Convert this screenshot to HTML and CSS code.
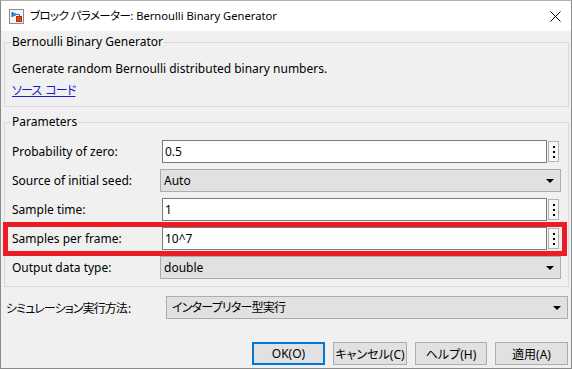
FILE: index.html
```html
<!DOCTYPE html>
<html>
  <head>
    <link rel="stylesheet" href="styles.css">
  </head>
  <body>
    <div class="window">
      <div class="titlebar">
        <svg class="app-icon" width="15" height="15" viewBox="0 0 15 15">
          <rect x="0.5" y="0.5" width="14" height="14" fill="#f4f4f4" stroke="#8c8c8c"/>
          <path d="M3 3v5M3.5 3.5l4 2-4 2z" stroke="#1f6fc4" fill="#4a9be0" stroke-width="1"/>
          <path d="M7.5 5.5h3v2" stroke="#1f6fc4" fill="none"/>
          <rect x="7.5" y="7.5" width="5" height="5" fill="#e04a1a" stroke="#a8300c"/>
        </svg>
        <span class="title"><span class="ja">ブロック パラメーター</span>: Bernoulli Binary Generator</span>
        <svg class="close" width="11" height="11" viewBox="0 0 11 11">
          <path d="M0.5 0.5l10 10M10.5 0.5l-10 10" stroke="#000" stroke-width="1"/>
        </svg>
      </div>

      <fieldset class="group">
        <legend>Bernoulli Binary Generator</legend>
        <div class="desc">Generate random Bernoulli distributed binary numbers.</div>
        <div class="source"><a href="#">ソース コード</a></div>
      </fieldset>

      <fieldset class="group params">
        <legend>Parameters</legend>
        <div class="row">
          <span class="label">Probability of zero:</span>
          <span class="edit">0.5</span>
          <span class="more"><i></i><i></i><i></i></span>
        </div>
        <div class="row">
          <span class="label">Source of initial seed:</span>
          <span class="combo">Auto<b class="arrow"></b></span>
        </div>
        <div class="row">
          <span class="label">Sample time:</span>
          <span class="edit">1</span>
          <span class="more"><i></i><i></i><i></i></span>
        </div>
        <div class="row highlight">
          <span class="label">Samples per frame:</span>
          <span class="edit">10^7</span>
          <span class="more"><i></i><i></i><i></i></span>
        </div>
        <div class="row">
          <span class="label">Output data type:</span>
          <span class="combo">double<b class="arrow"></b></span>
        </div>
      </fieldset>

      <div class="sim-row">
        <span class="sim-label"><span class="ja">シミュレーション実行方法</span>:</span>
        <span class="combo sim-combo">インタープリター型実行<b class="arrow"></b></span>
      </div>

      <div class="buttons">
        <button class="btn default" style="width:73px">OK(O)</button>
        <button class="btn" style="width:74px">キャンセル(C)</button>
        <button class="btn" style="width:72px">ヘルプ(H)</button>
        <button class="btn" style="width:73px">適用(A)</button>
      </div>
    </div>
  </body>
</html>
```

FILE: styles.css
```css
body {
  margin: 0;
  font-family: "Noto Sans", "Noto Sans CJK JP", sans-serif;
  font-size: 12px;
  font-feature-settings: "palt";
  color: #000;
}
.window {
  width: 572px;
  height: 369px;
  box-sizing: border-box;
  border: 1px solid #8a8a8a;
  border-top-color: #b0b0b0;
  background-color: #f0f0f0;
  overflow: hidden;
}
.titlebar {
  height: 30px;
  background-color: #fff;
  display: flex;
  align-items: center;
}
.app-icon {
  margin-left: 8px;
  margin-top: 1px;
}
.title {
  margin-left: 6px;
  flex: 1;
  font-size: 11.2px;
  line-height: 16px;
}
.title .ja {
  font-size: 11.5px;
  letter-spacing: -0.6px;
}
.close {
  margin-right: 10px;
}
.group {
  margin: 3px 2px 0 3px;
  padding: 0 6px 7px 6px;
  border: 1px solid #d9d9d9;
}
.group legend {
  padding: 0 1px;
  line-height: 16px;
}
.desc {
  margin-top: 11px;
  padding-left: 1px;
  line-height: 16px;
}
.source {
  margin-top: 6px;
  padding-left: 1px;
  line-height: 16px;
}
.source a {
  color: #1a1acc;
  text-decoration: underline;
  letter-spacing: -0.9px;
  word-spacing: 2px;
}
.params {
  margin-top: 7px;
}
.row {
  display: flex;
  align-items: center;
  height: 23px;
  margin-top: 6px;
}
.params legend + .row {
  margin-top: 10px;
}
.label {
  width: 148px;
  padding-left: 1px;
}
.edit {
  flex: 1;
  height: 23px;
  box-sizing: border-box;
  margin-left: 2px;
  border: 1px solid #7a7a7a;
  background-color: #fff;
  padding-left: 2px;
  line-height: 21px;
}
.more {
  width: 11px;
  height: 21px;
  box-sizing: border-box;
  margin-left: 1px;
  margin-right: 3px;
  border: 1px solid #b4b4b4;
  background-color: #f7f7f7;
  display: flex;
  flex-direction: column;
  align-items: center;
  justify-content: center;
  gap: 3px;
}
.more i {
  width: 2px;
  height: 2px;
  background-color: #000;
}
.combo {
  flex: 1;
  height: 23px;
  box-sizing: border-box;
  margin-right: 1px;
  border: 1px solid #adadad;
  background-color: #e1e1e1;
  padding-left: 3px;
  line-height: 21px;
  display: flex;
  align-items: center;
}
.arrow {
  margin-left: auto;
  margin-right: 6px;
  width: 0;
  height: 0;
  border-left: 4px solid transparent;
  border-right: 4px solid transparent;
  border-top: 4px solid #000;
}
.highlight {
  position: relative;
}
.highlight::after {
  content: "";
  position: absolute;
  left: -8px;
  top: -5px;
  right: -5px;
  bottom: -6px;
  border: 5px solid #ed1c24;
  pointer-events: none;
}
.sim-row {
  display: flex;
  align-items: center;
  height: 23px;
  margin-top: 9px;
}
.sim-label {
  width: 160px;
  padding-left: 5px;
}
.sim-label .ja {
  letter-spacing: -0.9px;
  margin-right: 1px;
}
.sim-combo {
  margin-right: 3px;
  padding-left: 5px;
  letter-spacing: -0.8px;
}
.buttons {
  display: flex;
  justify-content: flex-end;
  gap: 8px;
  margin-top: 23px;
  padding-right: 3px;
}
.btn {
  height: 23px;
  box-sizing: border-box;
  border: 1px solid #adadad;
  background-color: #e1e1e1;
  font-family: "Noto Sans", "Noto Sans CJK JP", sans-serif;
  font-size: 12px;
  font-feature-settings: "palt";
  white-space: nowrap;
  padding: 0;
  color: #000;
}
.btn.default {
  border: 2px solid #0078d7;
}
```
